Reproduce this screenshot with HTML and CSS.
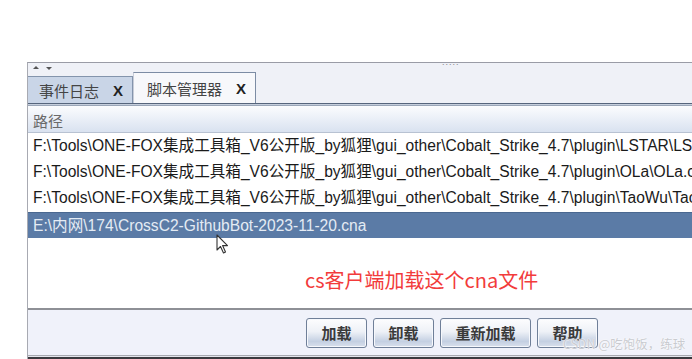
FILE: index.html
```html
<!DOCTYPE html>
<html>
<head>
<meta charset="utf-8">
<link rel="stylesheet" href="styles.css">
</head>
<body>
<div class="page">
  <div class="spacer"></div>
  <div class="frame">
    <div class="strip">
      <div class="arrows"><span class="up"></span><span class="down"></span></div>
      <div class="grip">.....</div>
      <div class="tabs">
        <div class="tab tab-off"><span class="tab-label">事件日志</span><span class="tab-x">X</span></div>
        <div class="tab tab-on"><span class="tab-label">脚本管理器</span><span class="tab-x">X</span></div>
      </div>
    </div>
    <div class="tabline"></div>
    <div class="table">
      <div class="thead">路径</div>
      <div class="row">F:\Tools\ONE-FOX集成工具箱_V6公开版_by狐狸\gui_other\Cobalt_Strike_4.7\plugin\LSTAR\LSTAR.cna</div>
      <div class="row">F:\Tools\ONE-FOX集成工具箱_V6公开版_by狐狸\gui_other\Cobalt_Strike_4.7\plugin\OLa\OLa.cna</div>
      <div class="row">F:\Tools\ONE-FOX集成工具箱_V6公开版_by狐狸\gui_other\Cobalt_Strike_4.7\plugin\TaoWu\TaoWu.cna</div>
      <div class="row row-sel">E:\内网\174\CrossC2-GithubBot-2023-11-20.cna</div>
    </div>
    <div class="buttons">
      <button class="btn btn-2">加载</button>
      <button class="btn btn-2">卸载</button>
      <button class="btn btn-4">重新加载</button>
      <button class="btn btn-2">帮助</button>
    </div>
    <div class="bottomline"></div>
  </div>
  <div class="note">cs客户端加载这个cna文件</div>
  <svg class="cursor" width="14" height="21" viewBox="0 0 14 21"><path d="M1 1 L1 16 L4.5 12.5 L7.5 19 L9.5 18 L6.6 11.6 L11.5 11.6 Z" fill="#fff" stroke="#333" stroke-width="1.1" stroke-linejoin="round"/></svg>
  <div class="mark">CSDN @吃饱饭，练球</div>
</div>
</body>
</html>
```
FILE: styles.css
```css
* { box-sizing: border-box; }
html, body { margin: 0; padding: 0; background: #fff; }
.page {
  position: relative;
  width: 692px;
  height: 359px;
  overflow: hidden;
  font-family: "Liberation Sans", "Noto Sans CJK SC", sans-serif;
}
.spacer { height: 62px; }
.frame {
  margin-left: 27px;
  border-top: 1px solid #9a9ca6;
  border-left: 1px solid #a8aab2;
  background: #eff1f7;
}
.strip {
  position: relative;
  height: 40px;
  display: flex;
  align-items: flex-end;
}
.arrows {
  position: absolute;
  left: 5px;
  top: 3px;
  display: flex;
  gap: 7px;
}
.up, .down { width: 0; height: 0; border-left: 3px solid transparent; border-right: 3px solid transparent; }
.up { border-bottom: 3px solid #555; }
.down { border-top: 3px solid #555; margin-top: 1px; }
.grip {
  position: absolute;
  left: 414px;
  top: -6px;
  font-size: 9px;
  color: #888;
  letter-spacing: 1px;
}
.tabs { display: flex; align-items: flex-end; }
.tab {
  display: flex;
  align-items: center;
  font-family: "Noto Sans CJK SC", sans-serif;
  font-size: 15px;
  color: #444;
}
.tab-off {
  width: 105px;
  height: 27px;
  padding-left: 11px;
  background: #c9d5e7;
  border-top: 1px solid #8394ac;
  border-right: 1px solid #8394ac;
}
.tab-on {
  width: 123px;
  height: 31px;
  padding-left: 13px;
  background: #f7f8fb;
  border-top: 1px solid #7c8ca4;
  border-right: 1px solid #7c8ca4;
  border-left: 1px solid #c7ccd8;
}
.tab-x {
  margin-left: 14px;
  font-family: "Liberation Sans", sans-serif;
  font-weight: bold;
  font-size: 15px;
  color: #222;
}
.tabline {
  height: 3px;
  border-top: 1px solid #56657c;
  border-bottom: 1px solid #9aa6b8;
  background: #c5cedc;
}
.table {
  height: 204px;
  background: #fff;
  border-bottom: 2px solid #8e9096;
}
.thead {
  height: 27px;
  padding: 4px 0 0 5px;
  font-family: "Noto Sans CJK SC", sans-serif;
  font-size: 15px;
  color: #6a6a6a;
  background: linear-gradient(#fbfcfe, #d9e2f0);
  border-bottom: 1px solid #b8c2d2;
}
.row {
  height: 26px;
  line-height: 26px;
  padding-left: 5px;
  font-size: 15.6px;
  color: #1a1a1a;
  white-space: nowrap;
  overflow: hidden;
}
.row-sel {
  margin-top: 1px;
  background: #5b7ba6;
  color: #e4ebf4;
  border-top: 1px solid #4a6890;
  line-height: 25px;
}
.buttons {
  height: 45px;
  display: flex;
  align-items: center;
  gap: 6px;
  padding-left: 278px;
  background: #f0f2fa;
}
.btn {
  height: 30px;
  padding: 0;
  font-family: "Noto Sans CJK SC", sans-serif;
  font-weight: bold;
  font-size: 15px;
  color: #3a3a3a;
  border: 1px solid #6f7f98;
  border-radius: 3px;
  background: linear-gradient(#fdfdfe 0%, #eef1f7 45%, #c4d0e2 80%, #d9e0ec 100%);
  box-shadow: inset 0 0 0 1px #f6f8fc;
}
.btn-2 { width: 61px; }
.btn-4 { width: 91px; }
.bottomline {
  height: 4px;
  border-top: 1px solid #a7a9b0;
  border-bottom: 2px solid #3a3a3e;
  background: #e4e6ec;
}
.note {
  position: absolute;
  left: 305px;
  top: 265px;
  font-family: "Noto Sans CJK SC", sans-serif;
  font-size: 20px;
  color: #f23b3b;
  white-space: nowrap;
}
.cursor {
  position: absolute;
  left: 216px;
  top: 234px;
}
.mark {
  position: absolute;
  left: 563px;
  top: 334px;
  font-family: "Noto Sans CJK SC", sans-serif;
  font-size: 12.5px;
  color: #c9cbd0;
  text-shadow: 0 0 2px #fff, 0 0 1px #fff;
  white-space: nowrap;
}
```
